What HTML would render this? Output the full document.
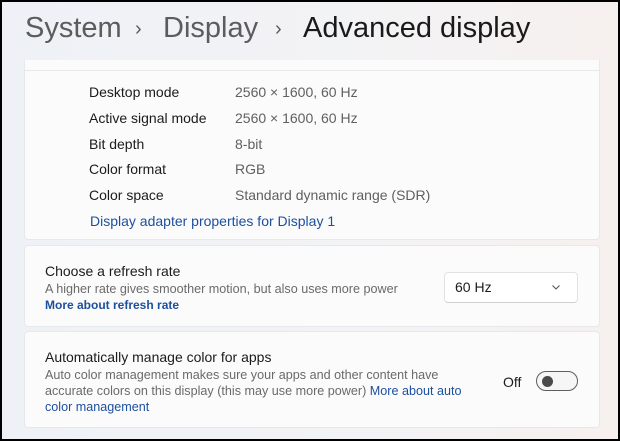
<!DOCTYPE html>
<html><head><style>
*{margin:0;padding:0;box-sizing:border-box}
body{width:620px;height:441px;overflow:hidden;background:#000;font-family:"Liberation Sans",sans-serif}
.frame{position:absolute;left:2px;top:2px;width:616px;height:437px;background:linear-gradient(90deg,#eef1f6,#f3f3f5 60%,#f6f0ee);}
.card{position:absolute;left:22px;width:576px;background:#fbfbfc;border:1px solid #e6e8eb;border-radius:4px}
.t{position:absolute;white-space:nowrap}
.h{font-size:29px;color:#5c5c5c;top:10px}
.r{font-size:14px;color:#1b1b1b}
.v{font-size:14px;color:#606060}
.s{font-size:12.6px;color:#6a6a6a}
.l{color:#1d4f9c}
</style></head><body><div class="frame">
<div class="t h" style="left:23px">System</div>
<div class="t h" style="left:133px;font-size:20px;top:16px">›</div>
<div class="t h" style="left:161px">Display</div>
<div class="t h" style="left:273px;font-size:20px;top:16px">›</div>
<div class="t h" style="left:301px;color:#1a1a1a">Advanced display</div>
<div class="card" style="top:58px;height:180px;border-top:none;border-radius:0 0 4px 4px">
 <div style="position:absolute;left:0;right:0;top:10px;border-top:1px solid #e8e8ea"></div>
</div>
<div class="t r" style="left:87px;top:82px">Desktop mode</div><div class="t v" style="left:233px;top:82px">2560 × 1600, 60 Hz</div>
<div class="t r" style="left:87px;top:108px">Active signal mode</div><div class="t v" style="left:233px;top:108px">2560 × 1600, 60 Hz</div>
<div class="t r" style="left:87px;top:134px">Bit depth</div><div class="t v" style="left:233px;top:134px">8-bit</div>
<div class="t r" style="left:87px;top:159px">Color format</div><div class="t v" style="left:233px;top:159px">RGB</div>
<div class="t r" style="left:87px;top:185px">Color space</div><div class="t v" style="left:233px;top:185px">Standard dynamic range (SDR)</div>
<div class="t r l" style="left:88px;top:211px">Display adapter properties for Display 1</div>
<div class="card" style="top:243px;height:82px"></div>
<div class="t r" style="left:43px;top:261px">Choose a refresh rate</div>
<div class="t s" style="left:43px;top:280px">A higher rate gives smoother motion, but also uses more power</div>
<div class="t s l" style="left:43px;top:296px;font-weight:bold;font-size:12px">More about refresh rate</div>
<div style="position:absolute;left:442px;top:270px;width:134px;height:31px;background:#fff;border:1px solid #e2e2e2;border-bottom-color:#cfcfcf;border-radius:4px"></div>
<div class="t r" style="left:453px;top:277px">60 Hz</div>
<svg style="position:absolute;left:549px;top:281px" width="10" height="8"><path d="M1.5 2.5L5 6L8.5 2.5" stroke="#555" fill="none" stroke-width="1.1"/></svg>
<div class="card" style="top:329px;height:97px"></div>
<div class="t r" style="left:43px;top:347px">Automatically manage color for apps</div>
<div class="t s" style="left:43px;top:366px">Auto color management makes sure your apps and other content have</div>
<div class="t s" style="left:43px;top:382px">accurate colors on this display (this may use more power) <span class="l">More about auto</span></div>
<div class="t s l" style="left:43px;top:398px">color management</div>
<div class="t r" style="left:501px;top:372px">Off</div>
<div style="position:absolute;left:534px;top:369px;width:42px;height:20px;border:1.5px solid #5e5e5e;border-radius:10px;background:#f6f6f6"></div>
<div style="position:absolute;left:540px;top:374px;width:11px;height:11px;border-radius:50%;background:#4a4a4a"></div>
</div></body></html>
